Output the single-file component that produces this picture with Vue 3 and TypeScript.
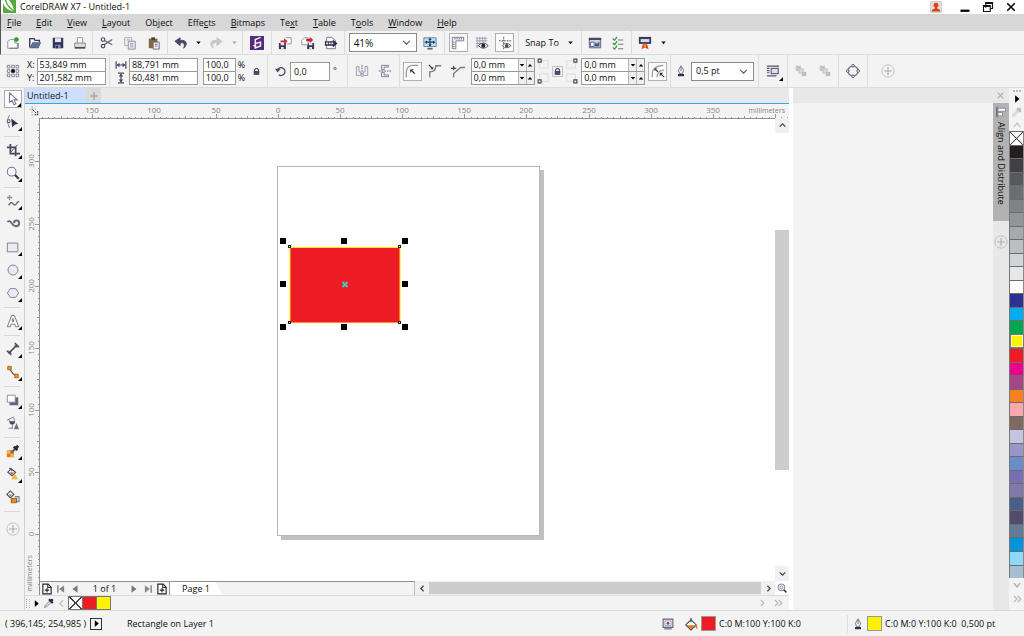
<script setup lang="ts">
import { ref } from 'vue'

const P = '#4a4763'

const icons: Record<string, string> = {
  logo: '<rect width="16" height="16" fill="#58a83f"/><path d="M0 3Q1 11 13 14 5 9 2 0H0z" fill="#fff"/><path d="M4 0q2 8 9.500 13Q12 5 7 0z" fill="#fff"/><path d="M13 14L5 5" stroke="#58a83f"/>',
  user: '<rect x="1" y="1" width="14" height="14" fill="#e6dcda" stroke="#c9bcba"/><circle cx="8" cy="5.500" r="3.200" fill="#d8401c"/><path d="M6.500 8h3v2l4 2v2h-11v-2l4-2z" fill="#d8401c"/>',
  min: '<path d="M2 13h12" stroke="#000" stroke-width="3"/>',
  restore: '<path d="M5 9V2h9v8h-3M2 6h9v8H2z" fill="none" stroke="#111" stroke-width="1.500"/><path d="M5 3h9M2 7h9" stroke="#111" stroke-width="2"/>',
  close: '<path d="M3 3l10 10M13 3L3 13" stroke="#000" stroke-width="2"/>',
  newdoc: '<path d="M2 6l3-2h5v4h3v6H2z" fill="#fafafa" stroke="#8c8ca0"/><path d="M4 14h10V8" fill="none" stroke="#6d6b80"/><circle cx="12" cy="4" r="2.600" fill="#25a32a"/>',
  open: '<path d="M2 13V3h5l1 2h5v2" fill="none" stroke="#3b3960" stroke-width="1.600"/><path d="M2 14l3-7h10l-3 7z" fill="#4d6080"/><path d="M5.500 8h8.500l-2 5H3.500z" fill="#5b7596"/>',
  save: '<path d="M2 2h12v12H2z" fill="#34325a"/><path d="M4.500 2.500h7v4.500h-7z" fill="#e7e9f2"/><path d="M5 10h6v4H5z" fill="#8a90ad"/><path d="M6 11h2v3H6z" fill="#24224a"/>',
  print: '<path d="M5 8V2h6v6" fill="#fff" stroke="#85859a"/><path d="M2 8h12v5H2z" fill="#e6e7da" stroke="#77778a"/><path d="M2 13.500h12" stroke="#4c4a62" stroke-width="2"/><path d="M4 10h8" stroke="#d8cf6e"/>',
  cut: '<path d="M3 4l11 6M3 11l11-7" stroke="#666478" stroke-width="1.400"/><circle cx="3.500" cy="4" r="2" fill="#f3f3f3" stroke="#4a4763" stroke-width="1.300"/><circle cx="3.500" cy="11.500" r="2" fill="#f3f3f3" stroke="#4a4763" stroke-width="1.300"/>',
  copy: '<path d="M2 2h8v9H2z" fill="#f3f6f3" stroke="#99a9a4"/><path d="M6 6h8v9H6z" fill="#eee" stroke="#85859a"/><path d="M8 8.500h4M8 10.500h4M8 12.500h4M4 4.500h4" stroke="#8e9fae"/>',
  paste: '<path d="M2 3h10v11H2z" fill="#806a3c"/><path d="M5 1.500h4v3H5z" fill="#474340"/><path d="M7 7h7v8H7z" fill="#f1f1f5" stroke="#66647c"/><path d="M9 9.500h3M9 11.500h3" stroke="#66647c"/>',
  undo: `<path d="M7 2L1 6l6 5V8c4-1 6 1 4 6 5-4 4-10-4-9z" fill="${P}" stroke="${P}"/>`,
  redo: '<path d="M9 2l6 4-6 5V8C5 7 3 9 5 14 0 10 1 4 9 5z" fill="#c7c7c9" stroke="#c7c7c9"/>',
  caret: '<path d="M4 6h8l-4 5z" fill="#111"/>',
  caretgrey: '<path d="M4 6h8l-4 5z" fill="#aaa"/>',
  sconnect: '<rect width="16" height="16" fill="#562a7d"/><path d="M12 1.500L6 4v4.500l6-1.500v4.500L5 14" fill="none" stroke="#f5eefa" stroke-width="1.700"/><path d="M3 11l4-2.500v5z" fill="#f5eefa"/>',
  imp: '<path d="M1 8h8v7H1z" fill="#39375e"/><path d="M3 8h4v2.500H3zM3.500 12.500h3V15h-3z" fill="#e6e8f0"/><path d="M9 2h6v7h-5" fill="#fff" stroke="#84849a"/><path d="M3 5h4V2.500L11 6 7 9V7H3z" fill="#c1272d"/>',
  exp: '<path d="M7 8h8v7H7z" fill="#39375e"/><path d="M9 8h4v2.500H9zM9.500 12.500h3V15h-3z" fill="#e6e8f0"/><path d="M1 5l3-3h4v8H1z" fill="#fff" stroke="#84849a"/><path d="M6 3h4V1l4 3.500L10 8V6H6z" fill="#c1272d"/>',
  pdf: '<path d="M3 1.500h6l4 3.500v9.500H3z" fill="#fff" stroke="#6f6d84"/><path d="M1 6h9V4l5.500 4.500L10 13v-2H1z" fill="#2f2d49"/><path d="M2.500 8.500h9" stroke="#fff" stroke-width="2" stroke-dasharray="2 1"/>',
  full: '<path d="M1 2h14v10H1z" fill="#bfe2ef" stroke="#5d7d96"/><path d="M5 14.500h6" stroke="#667" stroke-width="2"/><path d="M8 3v8M3 7h10" stroke="#24345c" stroke-width="1.300"/><path d="M8 2l2 2.500H6zM8 12l2-2.500H6zM2 7l2.500-2v4zM14 7l-2.500-2v4z" fill="#24345c"/>',
  rulers: '<path d="M1.500 1.500h13v4h-9v9h-4z" fill="#eceef6" stroke="#74738c"/><path d="M4.500 2v2M7 2v2M9.500 2v2M12 2v2M2 7h2M2 9.500h2M2 12h2" stroke="#74738c"/>',
  grid: '<path d="M1 2.500h13M1 5.500h13M1 8.500h6M1 11.500h4M2.500 1v13M5.500 1v11M8.500 1v6M11.500 1v6" stroke="#9a99b4"/><path d="M4 11q5.500-6 11 0-5.500 6-11 0z" fill="#fff" stroke="#333"/><circle cx="9.500" cy="11" r="2.300" fill="#222"/>',
  guides: '<path d="M6.500 1v14M1 5.500h14" stroke="#444" stroke-dasharray="2 1"/><path d="M5 11q5-5 10 0-5 5-10 0z" fill="#fff" stroke="#555"/><circle cx="10" cy="11" r="2" fill="#444"/>',
  options: '<path d="M1.500 2.500h13v11h-13z" fill="#cdd5e6" stroke="#54526e"/><path d="M1 3.500h14" stroke="#3f3d58" stroke-width="2"/><path d="M3 7h4v5H3z" fill="#fff" stroke="#44587e"/><path d="M8 12V7l2 2 3-3v6z" fill="#44587e"/>',
  checks: '<path d="M2 3l2 2 3-4M2 8l2 2 3-4M2 13l2 2 3-4" fill="none" stroke="#3f9a3f" stroke-width="1.500"/><path d="M8 4.500h6M8 9.500h6M8 14.500h6" stroke="#77768d" stroke-width="1.200"/>',
  launch: '<path d="M1 1h14v8H1z" fill="#3a3853"/><path d="M3 3.500h10V7H3z" fill="#d4dbe8"/><path d="M5.500 9.500h5L12 15l-4-2-4 2z" fill="#e2401e"/><path d="M7 10h2v3H7z" fill="#f8a11c"/>',
  origin: '<g fill="#fff" stroke="#77768d"><path d="M1.500 1.500h3v3h-3zM6.500 1.500h3v3h-3zM11.500 1.500h3v3h-3zM1.500 6.500h3v3h-3zM11.500 6.500h3v3h-3zM1.500 11.500h3v3h-3zM6.500 11.500h3v3h-3zM11.500 11.500h3v3h-3z"/></g><path d="M6 6h4v4H6z" fill="#000"/>',
  wdim: `<path d="M1.500 3v10M14.500 3v10M3 8h10" stroke="${P}" stroke-width="1.600"/><path d="M2 8l4-3v6zM14 8l-4-3v6z" fill="${P}"/>`,
  hdim: `<path d="M4 1.500h8M4 14.500h8M8 3v10" stroke="${P}" stroke-width="1.600"/><path d="M8 2L5 6h6zM8 14l-3-4h6z" fill="${P}"/>`,
  lock: `<path d="M4.500 8V5q3.500-5 7 0v3" fill="none" stroke="${P}" stroke-width="2"/><path d="M3 7h10v7H3z" fill="${P}"/>`,
  rotate: `<path d="M4 5.500a5.200 5.200 0 1 1 1 7.500" fill="none" stroke="${P}" stroke-width="1.800"/><path d="M0 5h7.500L3.500 10z" fill="${P}"/>`,
  mirrorh: '<path d="M1.500 3v10h5V9h-2V3zM14.500 3v10h-5V9h2V3z" fill="#eef" stroke="#9695a8"/><path d="M8 1v14" stroke="#555" stroke-dasharray="2 1"/>',
  mirrorv: '<path d="M4 1.500h8v2H7v3H4zM4 14.500h8v-2H7v-3H4z" fill="#eef" stroke="#77768d"/><path d="M1 8h14" stroke="#555" stroke-dasharray="2 1"/>',
  round: '<path d="M1.500 15V9Q2 2 9 1.500h6" fill="none" stroke="#9a99a8" stroke-width="1.500"/><path d="M11 11L8 8" stroke="#333" stroke-width="1.500"/><path d="M6 6h4l-4 4z" fill="#333"/>',
  scallop: '<path d="M2 15V9q7 0 7-7h6" fill="none" stroke="#77768d" stroke-width="1.500"/><path d="M1 1l4 4" stroke="#333" stroke-width="1.500"/><path d="M6 6H3l3-3z" fill="#333"/>',
  chamfer: '<path d="M3 15v-4l8-7h5" fill="none" stroke="#77768d" stroke-width="1.500"/><path d="M0 5h6M3 2v5" stroke="#444" stroke-width="1.300"/>',
  cornertl: '<path d="M5 3.500h10v10M3.500 5v8.500H15" fill="none" stroke="#d3d3d3"/><path d="M1.500 1.500h4v4h-4z" fill="#fff" stroke="#444" stroke-width="1.500"/>',
  cornerbl: '<path d="M5 12.500h10v-10M3.500 11V2.500H15" fill="none" stroke="#d3d3d3"/><path d="M1.500 10.500h4v4h-4z" fill="#fff" stroke="#444" stroke-width="1.500"/>',
  cornertr: '<path d="M11 3.500H1v10M12.500 5v8.500H1" fill="none" stroke="#d3d3d3"/><path d="M10.500 1.500h4v4h-4z" fill="#fff" stroke="#444" stroke-width="1.500"/>',
  cornerbr: '<path d="M11 12.500H1v-10M12.500 11V2.500H1" fill="none" stroke="#d3d3d3"/><path d="M10.500 10.500h4v4h-4z" fill="#fff" stroke="#444" stroke-width="1.500"/>',
  relative: '<path d="M1.500 15V11Q2 2 14 1.500M7 15q0-8 8-8" fill="none" stroke="#9a99a8" stroke-width="1.400"/><path d="M4 5h3L4 8zM10 10h4l-4 4z" fill="#333"/><path d="M5 6l3 3M11 11l4 4" stroke="#333" stroke-width="1.300"/>',
  pen: '<path d="M8 1l3.500 6-1.500 4.500H6L4.500 7z" fill="#eceef2" stroke="#5d5b72"/><path d="M8 2v6" stroke="#5d5b72"/><path d="M4 13.500h8" stroke="#33314c" stroke-width="3"/>',
  wrap: '<path d="M1 2.500h14M1 5h3M1 7.500h3M1 10h3M1 13.500h11" stroke="#55536b" stroke-width="1.300"/><path d="M6 5h8v6H6z" fill="#dfe2ec" stroke="#67657e" stroke-width="1.400"/>',
  order: '<path d="M1 1h7v7H1z" fill="#c6c6c6"/><path d="M5 5h6v6H5z" fill="#dadada" stroke="#bbb"/><path d="M9 9h6v6H9z" fill="#c0c0c0"/>',
  curves: `<circle cx="8" cy="8" r="5.800" fill="none" stroke="#77768d" stroke-width="1.600"/><g fill="#fff" stroke="${P}"><circle cx="8" cy="2" r="1.500"/><circle cx="8" cy="14" r="1.500"/><circle cx="2" cy="8" r="1.500"/><circle cx="14" cy="8" r="1.500"/></g>`,
  plus: '<circle cx="8" cy="8" r="7" fill="none" stroke="#b9b9b9"/><path d="M8 3.500v9M3.500 8h9" stroke="#adadad" stroke-width="1.300"/>',
  pick: '<path d="M4 1v11l3-2.500 2 5 2.300-1-2-4.500H13z" fill="#fff" stroke="#77768d" stroke-width="1.200"/>',
  shape: `<path d="M4 0Q0 6 4 15" fill="none" stroke="#77768d"/><path d="M1.500 5.500h3v3h-3z" fill="#fff" stroke="${P}"/><path d="M6 4l8 6-4 1-3 3z" fill="#34324c"/>`,
  crop: `<path d="M5 1v11h11M1 5h10v10" fill="none" stroke="${P}" stroke-width="2"/><path d="M13 2L5 11" stroke="${P}"/>`,
  zoom: '<path d="M9.500 9.500l5 5" stroke="#33314c" stroke-width="2.400"/><circle cx="6.500" cy="6.500" r="5" fill="#f4f5fb" stroke="#77768d" stroke-width="1.200"/>',
  freehand: '<path d="M4 1v6M1 4h6" stroke="#8f8ea2" stroke-width="1.500"/><path d="M3 13q3-5 5-2t4 0 3-2" fill="none" stroke="#66647c" stroke-width="1.600"/>',
  artistic: '<path d="M1.500 5.500q3-2 4.500 1t5 4q4 0 4-3.500t-3.500-3-1.500 3" fill="none" stroke="#66647c" stroke-width="2.200"/>',
  rect: '<path d="M1.500 3.500h12v10h-12z" fill="#eaebf5" stroke="#77768d"/>',
  ellipse: '<circle cx="8" cy="8" r="5.700" fill="#eaebf5" stroke="#77768d"/>',
  polygon: '<path d="M5 3h6l3.500 5-3.500 5H5L1.500 8z" fill="#eaebf5" stroke="#77768d"/>',
  text: '<path d="M1.500 14.500L6.500 1.500h3l5 13h-3.500l-1-3h-4l-1 3zM7 8.500h2L8 5z" fill="#fff" stroke="#66647c"/>',
  dimension: `<path d="M4 12L12 4" stroke="${P}" stroke-width="2"/><path d="M1 10l5 5M10 1l5 5" stroke="${P}" stroke-width="1.500"/><path d="M3 13V9l4 4zM13 3v4L9 3z" fill="${P}"/>`,
  connector: `<path d="M4 4l4 6 4 2" fill="none" stroke="${P}" stroke-width="1.300"/><path d="M2 1.500h4v4H2zM10 10.500h4v4h-4z" fill="#f39222" stroke="#b35c12"/>`,
  shadow: '<path d="M4 5h10v9H4z" fill="#66647c"/><path d="M1.500 2.500h9v8h-9z" fill="#fff" stroke="#85849a"/>',
  transparency: `<path d="M1 5l8-4M3.500 4l1.500 5q3 2 5-1L9 2M7.500 9.500L7 14M3 14h5" fill="none" stroke="#77768d"/><path d="M4 6h6L9 9H5z" fill="${P}"/><path d="M12 8l3 7H9z" fill="#66758f"/>`,
  eyedrop: '<path d="M1 7h8v8H1z" fill="#e2791c"/><path d="M1 7h4v4H1zM5 11h4v4H5z" fill="#f6b04e"/><path d="M6 10l5-5" stroke="#66647c" stroke-width="2.500"/><path d="M9 3l4 4M11 5l3-3" stroke="#28263f" stroke-width="3.200"/>',
  ifill: `<path d="M2 6l4-4 5 4-4 4z" fill="#eef" stroke="${P}" stroke-width="1.200"/><path d="M4 6h5l-2 3z" fill="#cf7a22"/><path d="M4 1l3 3" stroke="${P}" stroke-width="1.500"/><path d="M10 8l4 6H6z" fill="#f4b83c"/>`,
  sfill: `<path d="M1 5l4-4 4 4-4 4z" fill="#eef" stroke="${P}" stroke-width="1.200"/><path d="M3 5h4L5 8z" fill="#cf7a22"/><path d="M10 7.500h5v6h-3" fill="#c9d4e6" stroke="#5a6a8a"/><path d="M6 9.500h6v5H6z" fill="#f08c2e" stroke="#925015"/>`,
  corner: '<path d="M5 1v14M1 5h12" stroke="#555" stroke-dasharray="2 2"/><path d="M6 6l5 5M14 8v6H9" fill="none" stroke="#222" stroke-width="1.600" stroke-dasharray="3 1"/>',
  addpage: '<path d="M2.500 1.500h7l4 4v9h-11z" fill="#fff" stroke="#222" stroke-width="1.500"/><path d="M9 1.500V6h4.500M8 6.500v6M5 9.500h6" fill="none" stroke="#222" stroke-width="1.400"/>',
  first: '<path d="M3 2v12" stroke="#777" stroke-width="2"/><path d="M13 2v12L5 8z" fill="#888"/>',
  prev: '<path d="M12 2v12L4 8z" fill="#777"/>',
  next: '<path d="M4 2v12l8-6z" fill="#777"/>',
  last: '<path d="M13 2v12" stroke="#777" stroke-width="2"/><path d="M3 2v12l8-6z" fill="#888"/>',
  play: '<path d="M5 2v12l7-6z" fill="#000"/>',
  dropper: '<path d="M2 14l1-3 6-6 2 2-6 6z" fill="#d8dbe4" stroke="#77768d"/><path d="M8 3l5 5M10.500 5.500L13 3" stroke="#28263f" stroke-width="3"/>',
  droppergrey: '<path d="M2 14l1-3 6-6 2 2-6 6z" fill="#ddd" stroke="#ccc"/><path d="M8 3l5 5M10.500 5.500L13 3" stroke="#bdbdbd" stroke-width="3"/>',
  up: '<path d="M3 10l5-5 5 5" fill="none" stroke="#444" stroke-width="2.200"/>',
  down: '<path d="M3 6l5 5 5-5" fill="none" stroke="#444" stroke-width="2.200"/>',
  left: '<path d="M10 3L5 8l5 5" fill="none" stroke="#444" stroke-width="2.200"/>',
  right: '<path d="M6 3l5 5-5 5" fill="none" stroke="#444" stroke-width="2.200"/>',
  upg: '<path d="M3 11l5-6 5 6" fill="none" stroke="#c4c4c4" stroke-width="2.200"/>',
  downg: '<path d="M3 5l5 6 5-6" fill="none" stroke="#aaa" stroke-width="2.200"/>',
  leftg: '<path d="M11 2L5 8l6 6" fill="none" stroke="#bdbdbd" stroke-width="2.200"/>',
  rightg: '<path d="M6 3l5 5-5 5" fill="none" stroke="#bbb" stroke-width="2.200"/>',
  moreg: '<path d="M3 3l5 5-5 5M9 3l5 5-5 5" fill="none" stroke="#b4b4b4" stroke-width="1.800"/>',
  chev: '<path d="M2 5l6 6 6-6" fill="none" stroke="#555" stroke-width="1.800"/>',
  closeg: '<path d="M3 3l10 10M13 3L3 13" stroke="#a8a8a8" stroke-width="1.800"/>',
  plusg: '<path d="M8 2v12M2 8h12" stroke="#a8a8a8" stroke-width="2.400"/>',
  align: '<path d="M2.500 1v14" stroke="#55536b" stroke-width="1.500"/><path d="M4 3h10v4H4zM4 9h6v4H4z" fill="#fff" stroke="#77768d"/>',
  zoomnav: '<path d="M10 10l5 5" stroke="#33314c" stroke-width="2.400"/><circle cx="7" cy="7" r="5.500" fill="#f4f5fb" stroke="#66647c" stroke-width="1.300"/><circle cx="7" cy="7" r="2.300" fill="none" stroke="#66647c"/>',
  proof: '<path d="M1.500 1.500h13v11h-13z" fill="#dfe2ec" stroke="#66647c" stroke-width="1.500"/><path d="M4 4h8v6H4z" fill="#fff" stroke="#8b93b8"/><circle cx="8" cy="7" r="2" fill="#a33c50"/><path d="M3 14.500h10" stroke="#66647c" stroke-width="1.500"/>',
  bucket: '<path d="M2 9l6-6 6 6-6 6z" fill="#fff" stroke="#44425c" stroke-width="1.200"/><path d="M3 9.500h10L8 14z" fill="#d9781c"/><path d="M8 1v5" stroke="#44425c" stroke-width="1.200"/><path d="M13 8q3 2 2 6-2-1-2-6z" fill="#d9781c"/>',
}

const menus: [string, string, string][] = [
  ['', 'F', 'ile'], ['', 'E', 'dit'], ['', 'V', 'iew'], ['', 'L', 'ayout'], ['Ob', 'j', 'ect'],
  ['Effe', 'c', 'ts'], ['', 'B', 'itmaps'], ['Te', 'x', 't'], ['', 'T', 'able'], ['T', 'o', 'ols'],
  ['', 'W', 'indow'], ['', 'H', 'elp'],
]

const tools: { name: string; label: string; flyout?: boolean; sep?: boolean; active?: boolean }[] = [
  { name: 'pick', label: 'Pick', flyout: true, active: true },
  { name: 'shape', label: 'Shape', flyout: true, sep: true },
  { name: 'crop', label: 'Crop', flyout: true },
  { name: 'zoom', label: 'Zoom', flyout: true, sep: true },
  { name: 'freehand', label: 'Freehand', flyout: true },
  { name: 'artistic', label: 'Artistic media' },
  { name: 'rect', label: 'Rectangle', flyout: true },
  { name: 'ellipse', label: 'Ellipse', flyout: true },
  { name: 'polygon', label: 'Polygon', flyout: true, sep: true },
  { name: 'text', label: 'Text', flyout: true, sep: true },
  { name: 'dimension', label: 'Dimension', flyout: true },
  { name: 'connector', label: 'Connector', flyout: true, sep: true },
  { name: 'shadow', label: 'Drop shadow', flyout: true },
  { name: 'transparency', label: 'Transparency', sep: true },
  { name: 'eyedrop', label: 'Color eyedropper', flyout: true },
  { name: 'ifill', label: 'Interactive fill', flyout: true },
  { name: 'sfill', label: 'Smart fill', sep: true },
]

const palette = [
  '#231f20', '#414042', '#58595b', '#6d6e71', '#808285', '#939598', '#a7a9ac', '#bcbec0', '#d1d3d4',
  '#e6e7e8', '#ffffff', '#2e3192', '#00aeef', '#00a651', '#fff200', '#ed1c24', '#ec008c', '#a54686',
  '#f58220', '#f9a8ac', '#7f6a62', '#c7c4e2', '#9b94cb', '#6a8cc8', '#7a6fb5', '#8179a8', '#465f8c',
  '#524b6b', '#647b96', '#0095da', '#8ed8f8', '#a3bfd0',
]

const stepPx = 6.21
const hOrigin = 253
const vOrigin = 416

interface Tick { pos: number; len: number; label: string }

function makeTicks(origin: number, from: number, to: number, dir: number): Tick[] {
  const out: Tick[] = []
  for (let i = from; i <= to; i++) {
    const major = i % 10 === 0
    out.push({
      pos: Math.round(origin + dir * i * stepPx),
      len: major ? 4 : i % 5 === 0 ? 2 : 1,
      label: major ? String(Math.abs(i * 5)) : '',
    })
  }
  return out
}
const hTicks = makeTicks(hOrigin, -38, 82, 1)
const vTicks = makeTicks(vOrigin, -8, 66, -1)

const handles = [[3, 3], [64, 3], [125, 3], [3, 46], [125, 46], [3, 89], [64, 89], [125, 89]]
const nodes = [[10, 9], [120, 9], [10, 85], [120, 85]]

const posX = ref('53,849 mm')
const posY = ref('201,582 mm')
const sizeW = ref('88,791 mm')
const sizeH = ref('60,481 mm')
const scaleX = ref('100,0')
const scaleY = ref('100,0')
const angle = ref('0,0')
const radii = ref([['0,0 mm', '0,0 mm'], ['0,0 mm', '0,0 mm']])
</script>

<template>
  <div class="app">
    <header class="titlebar">
      <svg class="logo" viewBox="0 0 16 16" v-html="icons.logo" />
      <span class="title">CorelDRAW X7 - Untitled-1</span>
      <button class="win user" aria-label="Account"><svg class="i12" viewBox="0 0 16 16" v-html="icons.user" /></button>
      <button class="win" aria-label="Minimize"><svg class="i12" viewBox="0 0 16 16" v-html="icons.min" /></button>
      <button class="win" aria-label="Restore"><svg class="i12" viewBox="0 0 16 16" v-html="icons.restore" /></button>
      <button class="win" aria-label="Close"><svg class="i12" viewBox="0 0 16 16" v-html="icons.close" /></button>
    </header>

    <nav class="menubar">
      <button v-for="m in menus" :key="m.join('')">{{ m[0] }}<u>{{ m[1] }}</u>{{ m[2] }}</button>
    </nav>

    <div class="toolbar standard">
      <div class="group">
        <button v-for="n in ['newdoc', 'open', 'save', 'print']" :key="n" class="tb" :aria-label="n"><svg class="i14" viewBox="0 0 16 16" v-html="icons[n]" /></button>
      </div>
      <div class="group">
        <button v-for="n in ['cut', 'copy', 'paste']" :key="n" class="tb" :aria-label="n"><svg class="i14" viewBox="0 0 16 16" v-html="icons[n]" /></button>
      </div>
      <div class="group">
        <button class="tb" aria-label="Undo"><svg class="i14" viewBox="0 0 16 16" v-html="icons.undo" /></button>
        <button class="tb slim" aria-label="Undo list"><svg class="i8" viewBox="0 0 16 16" v-html="icons.caret" /></button>
        <button class="tb" aria-label="Redo"><svg class="i14" viewBox="0 0 16 16" v-html="icons.redo" /></button>
        <button class="tb slim" aria-label="Redo list"><svg class="i8" viewBox="0 0 16 16" v-html="icons.caretgrey" /></button>
      </div>
      <div class="group">
        <button class="tb" aria-label="Search content"><svg class="i14" viewBox="0 0 16 16" v-html="icons.sconnect" /></button>
      </div>
      <div class="group">
        <button v-for="n in ['imp', 'exp', 'pdf']" :key="n" class="tb" :aria-label="n"><svg class="i14" viewBox="0 0 16 16" v-html="icons[n]" /></button>
      </div>
      <div class="group">
        <span class="combo zoomlevel">
          <select aria-label="Zoom level"><option>41%</option><option>100%</option></select>
          <svg class="i8" viewBox="0 0 16 16" v-html="icons.chev" />
        </span>
        <button class="tb" aria-label="Full-screen preview"><svg class="i14" viewBox="0 0 16 16" v-html="icons.full" /></button>
      </div>
      <div class="group">
        <button class="tb boxed" aria-label="Show rulers"><svg class="i14" viewBox="0 0 16 16" v-html="icons.rulers" /></button>
        <button class="tb" aria-label="Show grid"><svg class="i14" viewBox="0 0 16 16" v-html="icons.grid" /></button>
        <button class="tb boxed" aria-label="Show guidelines"><svg class="i14" viewBox="0 0 16 16" v-html="icons.guides" /></button>
      </div>
      <div class="group">
        <button class="snap">Snap To<svg class="i8" viewBox="0 0 16 16" v-html="icons.caret" /></button>
      </div>
      <div class="group">
        <button v-for="n in ['options', 'checks']" :key="n" class="tb" :aria-label="n"><svg class="i14" viewBox="0 0 16 16" v-html="icons[n]" /></button>
      </div>
      <div class="group">
        <button class="tb" aria-label="Application launcher"><svg class="i14" viewBox="0 0 16 16" v-html="icons.launch" /></button>
        <button class="tb slim" aria-label="Launcher list"><svg class="i8" viewBox="0 0 16 16" v-html="icons.caret" /></button>
      </div>
    </div>

    <div class="toolbar property">
      <div class="group">
        <button class="tb" aria-label="Object origin"><svg class="i14" viewBox="0 0 16 16" v-html="icons.origin" /></button>
        <div class="pair">
          <label for="px">X:</label><input id="px" v-model="posX" class="wide" />
          <label for="py">Y:</label><input id="py" v-model="posY" class="wide" />
        </div>
      </div>
      <div class="group">
        <div class="pair">
          <label for="sw" aria-label="Width"><svg class="i12" viewBox="0 0 16 16" v-html="icons.wdim" /></label><input id="sw" v-model="sizeW" class="wide" />
          <label for="sh" aria-label="Height"><svg class="i12" viewBox="0 0 16 16" v-html="icons.hdim" /></label><input id="sh" v-model="sizeH" class="wide" />
        </div>
        <div class="pair">
          <input id="kx" v-model="scaleX" class="small" /><label for="kx">%</label>
          <input id="ky" v-model="scaleY" class="small" /><label for="ky">%</label>
        </div>
        <button class="tb lockbtn" aria-label="Lock ratio"><svg class="i8" viewBox="0 0 16 16" v-html="icons.lock" /></button>
      </div>
      <div class="group rotation">
        <label for="rot" aria-label="Angle of rotation"><svg class="i12" viewBox="0 0 16 16" v-html="icons.rotate" /></label>
        <input id="rot" v-model="angle" class="angle" /><span class="deg">°</span>
      </div>
      <div class="group">
        <button v-for="n in ['mirrorh', 'mirrorv']" :key="n" class="tb" :aria-label="n"><svg class="i14" viewBox="0 0 16 16" v-html="icons[n]" /></button>
      </div>
      <div class="group">
        <button class="tb boxed" aria-label="Round corner"><svg class="i14" viewBox="0 0 16 16" v-html="icons.round" /></button>
        <button class="tb" aria-label="Scalloped corner"><svg class="i14" viewBox="0 0 16 16" v-html="icons.scallop" /></button>
        <button class="tb" aria-label="Chamfered corner"><svg class="i14" viewBox="0 0 16 16" v-html="icons.chamfer" /></button>
        <div class="spins">
          <div v-for="(_, r) in radii[0]" :key="r" class="spin">
            <input v-model="radii[0][r]" aria-label="Corner radius" />
            <button aria-label="Decrease"><svg class="i6" viewBox="0 0 16 16"><path d="M2 5h12l-6 7z" /></svg></button>
            <button aria-label="Increase"><svg class="i6" viewBox="0 0 16 16"><path d="M2 12h12L8 5z" /></svg></button>
          </div>
        </div>
        <div class="corners">
          <svg class="i12" viewBox="0 0 16 16" v-html="icons.cornertl" />
          <svg class="i12" viewBox="0 0 16 16" v-html="icons.cornerbl" />
        </div>
        <button class="editlock" aria-label="Edit corners together"><svg class="i8" viewBox="0 0 16 16" v-html="icons.lock" /></button>
        <div class="corners">
          <svg class="i12" viewBox="0 0 16 16" v-html="icons.cornertr" />
          <svg class="i12" viewBox="0 0 16 16" v-html="icons.cornerbr" />
        </div>
        <div class="spins">
          <div v-for="(_, r) in radii[1]" :key="r" class="spin">
            <input v-model="radii[1][r]" aria-label="Corner radius" />
            <button aria-label="Decrease"><svg class="i6" viewBox="0 0 16 16"><path d="M2 5h12l-6 7z" /></svg></button>
            <button aria-label="Increase"><svg class="i6" viewBox="0 0 16 16"><path d="M2 12h12L8 5z" /></svg></button>
          </div>
        </div>
        <button class="tb boxed" aria-label="Relative corner scaling"><svg class="i14" viewBox="0 0 16 16" v-html="icons.relative" /></button>
      </div>
      <div class="group">
        <label for="ow" aria-label="Outline width"><svg class="i12" viewBox="0 0 16 16" v-html="icons.pen" /></label>
        <span class="combo outline">
          <select id="ow"><option>0,5 pt</option><option>1,0 pt</option></select>
          <svg class="i8" viewBox="0 0 16 16" v-html="icons.chev" />
        </span>
      </div>
      <div class="group">
        <button class="tb fly" aria-label="Wrap text"><svg class="i14" viewBox="0 0 16 16" v-html="icons.wrap" /></button>
      </div>
      <div class="group">
        <button class="tb" aria-label="To front"><svg class="i12" viewBox="0 0 16 16" v-html="icons.order" /></button>
        <button class="tb" aria-label="To back"><svg class="i12" viewBox="0 0 16 16" v-html="icons.order" /></button>
      </div>
      <div class="group">
        <button class="tb" aria-label="Convert to curves"><svg class="i14" viewBox="0 0 16 16" v-html="icons.curves" /></button>
      </div>
      <div class="group">
        <button class="tb" aria-label="Customize"><svg class="i14" viewBox="0 0 16 16" v-html="icons.plus" /></button>
      </div>
    </div>

    <main class="workspace">
      <aside class="toolbox">
        <template v-for="t in tools" :key="t.name">
          <button class="tool" :class="{ active: t.active, fly: t.flyout }" :aria-label="t.label">
            <svg class="i14" viewBox="0 0 16 16" v-html="icons[t.name]" />
          </button>
          <hr v-if="t.sep" />
        </template>
        <button class="tool addtool" aria-label="Customize toolbox"><svg class="i14" viewBox="0 0 16 16" v-html="icons.plus" /></button>
      </aside>

      <section class="document">
        <div class="tabs">
          <button class="tab">Untitled-1</button>
          <button class="newtab" aria-label="New document"><svg class="i10" viewBox="0 0 16 16" v-html="icons.plusg" /></button>
        </div>
        <div class="hruler">
          <svg class="hscale">
            <g v-for="t in hTicks" :key="t.pos">
              <line :x1="t.pos" :x2="t.pos" y1="14" :y2="14 - t.len" />
              <text v-if="t.label && t.pos > 30 && t.pos < 710" :x="t.pos" y="9" text-anchor="middle">{{ t.label }}</text>
            </g>
          </svg>
          <svg class="origin i10" viewBox="0 0 16 16" v-html="icons.corner" />
          <span class="unit">millimeters</span>
        </div>
        <div class="stage">
          <div class="vruler">
            <svg class="vscale">
              <g v-for="t in vTicks" :key="t.pos">
                <line :y1="t.pos" :y2="t.pos" x1="14" :x2="14 - t.len" />
                <text v-if="t.label" :transform="`translate(9 ${t.pos}) rotate(-90)`" text-anchor="middle">{{ t.label }}</text>
              </g>
            </svg>
            <span class="unit vertical">millimeters</span>
          </div>
          <div class="sheet">
            <div class="view">
              <div class="canvas">
                <div class="page" />
                <svg class="selection" viewBox="0 0 130 93">
                  <rect x="10" y="9.500" width="110" height="75" fill="#ed1c24" stroke="#ffe600" />
                  <path d="M10 84.500h110" stroke="#f7941d" />
                  <rect v-for="(h, k) in handles" :key="'h' + k" :x="h[0] - 3" :y="h[1] - 3" width="6" height="6" />
                  <rect v-for="(n, k) in nodes" :key="'n' + k" :x="n[0] - 1.5" :y="n[1] - 1.5" width="2" height="2" fill="#fff" stroke="#222" />
                  <path d="M62.500 44l5 5M67.500 44l-5 5" stroke="#2fcfcf" stroke-width="1.800" />
                </svg>
              </div>
              <div class="vscroll">
                <button aria-label="Scroll up"><svg class="i8" viewBox="0 0 16 16" v-html="icons.up" /></button>
                <div class="track"><span class="before" /><span class="thumb" /><span class="after" /></div>
                <button aria-label="Scroll down"><svg class="i8" viewBox="0 0 16 16" v-html="icons.down" /></button>
              </div>
            </div>
            <div class="pagebar">
              <div class="pagenav">
                <button aria-label="Add page before"><svg class="i12" viewBox="0 0 16 16" v-html="icons.addpage" /></button>
                <button aria-label="First page"><svg class="i10" viewBox="0 0 16 16" v-html="icons.first" /></button>
                <button aria-label="Previous page"><svg class="i10" viewBox="0 0 16 16" v-html="icons.prev" /></button>
                <span class="count">1 of 1</span>
                <button aria-label="Next page"><svg class="i10" viewBox="0 0 16 16" v-html="icons.next" /></button>
                <button aria-label="Last page"><svg class="i10" viewBox="0 0 16 16" v-html="icons.last" /></button>
                <button aria-label="Add page after"><svg class="i12" viewBox="0 0 16 16" v-html="icons.addpage" /></button>
                <button class="pagetab">Page 1</button>
              </div>
              <div class="hscroll">
                <button aria-label="Scroll left"><svg class="i8" viewBox="0 0 16 16" v-html="icons.left" /></button>
                <span class="thumb" />
                <button aria-label="Scroll right"><svg class="i8" viewBox="0 0 16 16" v-html="icons.right" /></button>
              </div>
              <button class="navigator" aria-label="Navigator"><svg class="i10" viewBox="0 0 16 16" v-html="icons.zoomnav" /></button>
            </div>
          </div>
        </div>
        <div class="docpalette">
          <i class="grip" />
          <button aria-label="Palette menu"><svg class="i8" viewBox="0 0 16 16" v-html="icons.play" /></button>
          <button aria-label="Eyedropper"><svg class="i12" viewBox="0 0 16 16" v-html="icons.dropper" /></button>
          <button aria-label="Scroll palette left"><svg class="i8" viewBox="0 0 16 16" v-html="icons.leftg" /></button>
          <div class="chips">
            <button class="chip none" aria-label="No color" />
            <button class="chip red" aria-label="Red" />
            <button class="chip yellow" aria-label="Yellow" />
          </div>
          <span class="spacer" />
          <button class="scr" aria-label="Scroll palette right"><svg class="i10" viewBox="0 0 16 16" v-html="icons.rightg" /></button>
          <button class="scr" aria-label="Expand palette"><svg class="i10" viewBox="0 0 16 16" v-html="icons.moreg" /></button>
        </div>
      </section>

      <aside class="docker">
        <div class="dockhead"><button aria-label="Close docker"><svg class="i8" viewBox="0 0 16 16" v-html="icons.closeg" /></button></div>
        <div class="dockbody">
          <div class="docktabs">
            <button class="docktab"><svg class="i12" viewBox="0 0 16 16" v-html="icons.align" /><span>Align and Distribute</span></button>
            <button class="dockadd" aria-label="Add docker"><svg class="i14" viewBox="0 0 16 16" v-html="icons.plus" /></button>
          </div>
        </div>
      </aside>

      <aside class="palette">
        <div class="palhead">
          <i class="dots" />
          <button aria-label="Palette menu"><svg class="i10" viewBox="0 0 16 16" v-html="icons.play" /></button>
          <button aria-label="Eyedropper"><svg class="i12" viewBox="0 0 16 16" v-html="icons.droppergrey" /></button>
          <button aria-label="Scroll up"><svg class="i10" viewBox="0 0 16 16" v-html="icons.upg" /></button>
        </div>
        <div class="swatches">
          <button class="sw none" aria-label="No color" />
          <button v-for="c in palette" :key="c" class="sw" :class="{ picked: c === '#fff200' }" :style="{ background: c }" :aria-label="c" />
        </div>
        <div class="palfoot">
          <button aria-label="Scroll down"><svg class="i10" viewBox="0 0 16 16" v-html="icons.downg" /></button>
          <button aria-label="Expand palette"><svg class="i10" viewBox="0 0 16 16" v-html="icons.moreg" /></button>
        </div>
      </aside>
    </main>

    <footer class="status">
      <span class="coords">( 396,145; 254,985 )</span>
      <button class="more" aria-label="Status options"><svg class="i8" viewBox="0 0 16 16" v-html="icons.play" /></button>
      <span class="object">Rectangle on Layer 1</span>
      <svg class="i12 proof" viewBox="0 0 16 16" v-html="icons.proof" />
      <div class="fill">
        <svg class="i14" viewBox="0 0 16 16" v-html="icons.bucket" />
        <i class="colour red" /><span>C:0 M:100 Y:100 K:0</span>
      </div>
      <div class="stroke">
        <svg class="i12" viewBox="0 0 16 16" v-html="icons.pen" />
        <i class="colour yellow" /><span>C:0 M:0 Y:100 K:0&nbsp; 0,500 pt</span>
      </div>
    </footer>
  </div>
</template>

<style>
body { margin: 0; }
</style>

<style scoped>
.app {
  height: 100vh;
  display: flex;
  flex-direction: column;
  background: #f3f3f3;
  color: #0c0c0c;
  font: 9px/12px "Open Sans", "Noto Sans", sans-serif;
  overflow: hidden;
  white-space: nowrap;
}
.app * { box-sizing: border-box; }
button, input, select { font: inherit; color: inherit; margin: 0; padding: 0; border: 0; background: none; border-radius: 0; outline: 0; }
button { display: flex; align-items: center; justify-content: center; }
svg { display: block; flex: none; }
.i6 { width: 6px; height: 6px; }
.i8 { width: 9px; height: 9px; }
.i10 { width: 10px; height: 10px; }
.i12 { width: 12px; height: 12px; }
.i14 { width: 14px; height: 14px; }

.titlebar { height: 14px; flex: none; display: flex; align-items: center; background: #fff; padding: 0 2px; border-left: 1px solid #555; }
.logo { width: 13px; height: 13px; align-self: flex-start; }
.title { flex: 1; padding-left: 4px; }
.win { width: 23px; height: 12px; }
.win.user { margin-right: 6px; }

.menubar { height: 17px; flex: none; display: flex; gap: 15px; padding-left: 6px; background: #d7d7d7; border-left: 1px solid #555; }

.toolbar { display: flex; flex: none; border-bottom: 1px solid #dcdcdc; }
.standard { height: 24px; border-left: 1px solid #555; }
.property { height: 33px; }
.group { display: flex; align-items: center; justify-content: space-evenly; }
.group:not(:last-child) { border-right: 1px solid #dcdcdc; }
.tb { width: 20px; height: 19px; flex: none; position: relative; }
.tb.slim { width: 10px; }
.tb.boxed { border: 1px solid #b0b0b0; background: #fbfbfb; width: 19px; }
.standard .group:nth-child(1) { width: 92px; }
.standard .group:nth-child(2) { width: 75px; }
.standard .group:nth-child(3) { width: 75px; }
.standard .group:nth-child(4) { width: 29px; }
.standard .group:nth-child(5) { width: 73px; }
.standard .group:nth-child(6) { width: 100px; }
.standard .group:nth-child(7) { width: 74px; }
.standard .group:nth-child(8) { width: 63px; }
.standard .group:nth-child(9) { width: 50px; }
.standard .group:nth-child(10) { width: 40px; }
.snap { gap: 7px; }

.combo { display: grid; grid-template-columns: 1fr 14px; align-items: center; border: 1px solid #8a8a8a; background: #fff; height: 19px; }
.combo select { grid-area: 1 / 1 / 2 / 3; appearance: none; width: 100%; height: 17px; padding-left: 4px; }
.combo svg { grid-area: 1 / 2; pointer-events: none; }
.zoomlevel { width: 68px; font-size: 10px; }
.outline { width: 63px; }

.property .group:nth-child(1) { width: 110px; }
.property .group:nth-child(2) { width: 158px; }
.property .group:nth-child(3) { width: 80px; }
.property .group:nth-child(4) { width: 52px; }
.property .group:nth-child(5) { width: 271px; }
.property .group:nth-child(6) { width: 88px; }
.property .group:nth-child(7) { width: 29px; }
.property .group:nth-child(8) { width: 51px; }
.property .group:nth-child(9) { width: 29px; }
.property .group:nth-child(10) { width: 39px; }
.property .rotation { justify-content: flex-start; gap: 3px; padding-left: 7px; }
.property input { border: 1px solid #9a9a9a; background: #fff; padding-left: 2px; height: 14px; min-width: 0; }
.pair { display: grid; grid-template-columns: auto auto; align-items: center; column-gap: 2px; }
.pair input:nth-of-type(2) { margin-top: -1px; }
.wide { width: 69px; }
.small { width: 33px; }
.property .angle { width: 40px; height: 19px; padding-left: 3px; }
.lockbtn { width: 12px; }
.spins { width: 64px; }
.spin { display: flex; height: 14px; border: 1px solid #9a9a9a; background: #fff; }
.spin + .spin { margin-top: -1px; }
.property .spin input { flex: 1; border: 0; height: 12px; }
.spin button { width: 8px; background: #efefef; border-left: 1px solid #b4b4b4; }
.corners { display: flex; flex-direction: column; gap: 2px; }
.editlock { width: 11px; height: 11px; border: 1px solid #c4c4c4; }
.fly::after { content: ""; position: absolute; right: 0; bottom: 0; border: 2px solid transparent; border-right-color: #000; border-bottom-color: #000; }

.workspace { flex: 1; display: flex; min-height: 0; }
.toolbox { width: 25px; flex: none; border-right: 1px solid #d2d2d2; }
.tool { width: 18px; height: 18px; margin: 2px auto 5px 4px; position: relative; }
.tool.active { border: 1px solid #aaa; background: #fcfcfc; }
.toolbox hr { border: 0; height: 1px; background: #d8d8d8; margin: 0 4px 4px; }
.toolbox .addtool { margin-top: 8px; }

.document { flex: 1; min-width: 0; display: flex; flex-direction: column; }
.tabs { height: 16px; flex: none; display: flex; background: #e8e8e8; border-bottom: 1px solid #2fa8e6; }
.tab { width: 61px; justify-content: flex-start; padding-left: 2px; background: #cce0fd; color: #101830; }
.newtab { width: 15px; background: #dadada; }

.hruler { height: 14px; flex: none; position: relative; display: flex; align-items: center; justify-content: space-between; padding: 0 4px; }
.hscale { position: absolute; left: 0; top: 0; width: 100%; height: 14px; overflow: hidden; }
.hscale line, .vscale line { stroke: #999; shape-rendering: crispEdges; }
.hscale text, .vscale text { fill: #858585; font-size: 8px; }
.unit { position: relative; color: #858585; font-size: 7px; line-height: 10px; }
.origin { position: relative; background: #f3f3f3; }
.stage { flex: 1; display: flex; min-height: 0; }
.vruler { width: 15px; flex: none; position: relative; display: flex; align-items: flex-end; border-right: 1px solid #8f8f8f; }
.vscale { position: absolute; left: 0; top: 0; width: 14px; height: 100%; overflow: hidden; }
.vertical { writing-mode: vertical-rl; transform: rotate(180deg); padding: 3px 0; }
.sheet { flex: 1; min-width: 0; display: flex; flex-direction: column; }
.view { flex: 1; display: flex; min-height: 0; }
.canvas { flex: 1; position: relative; background: #fff; border-top: 1px solid #8f8f8f; overflow: hidden; }
.page { position: absolute; left: 237px; top: 47px; width: 263px; height: 370px; border: 1px solid #b8b8b8; background: #fff; box-shadow: 4px 4px 0 #c0c0c0; }
.selection { position: absolute; left: 240px; top: 119px; width: 130px; height: 93px; }
.vscroll { width: 14px; flex: none; display: flex; flex-direction: column; background: #f0f0f0; }
.vscroll button { height: 15px; }
.track { flex: 1; display: flex; flex-direction: column; background: #fff; }
.before { flex: 97; }
.track .thumb { flex: 240; }
.after { flex: 96; }
.thumb { background: #cdcdcd; }

.pagebar { height: 14px; flex: none; display: flex; }
.pagenav { flex: 0 0 375px; display: flex; align-items: stretch; border-top: 1px solid #8f8f8f; border-right: 1px solid #bbb; }
.pagenav button { width: 14px; }
.count { width: 45px; text-align: center; line-height: 14px; }
.pagenav .pagetab { width: 53px; background: #fff; clip-path: polygon(0 0, 88% 0, 100% 100%, 0 100%); border-left: 1px solid #999; }
.hscroll { flex: 1; display: flex; background: #f0f0f0; padding: 1px 0; }
.hscroll button { width: 14px; }
.hscroll .thumb { flex: 1; }
.navigator { width: 14px; background: #fff; }
.docpalette { height: 15px; flex: none; display: flex; align-items: center; border-top: 1px solid #dcdcdc; padding: 0 4px 0 1px; gap: 2px; }
.grip { width: 4px; height: 9px; border-left: 1px dotted #999; border-right: 1px dotted #bbb; }
.docpalette button { height: 14px; }
.chips { display: flex; }
.chip { width: 15px; border: 1px solid #777; margin-right: -1px; }
.spacer { flex: 1; }
.scr { width: 14px; }
.red { background: #ed1c24; }
.yellow { background: #fff200; }
.none { background: linear-gradient(45deg, transparent 46%, #444 47%, #444 53%, transparent 54%), linear-gradient(-45deg, transparent 46%, #444 47%, #444 53%, transparent 54%), #fff; }

.docker { width: 220px; flex: none; display: flex; flex-direction: column; border-left: 4px solid #fff; }
.dockhead { height: 15px; flex: none; background: #e8e8e8; display: flex; justify-content: flex-end; padding-right: 4px; }
.dockbody { flex: 1; display: flex; justify-content: flex-end; }
.docktabs { width: 16px; background: #e8e8e8; display: flex; flex-direction: column; }
.docktab { flex-direction: column; justify-content: flex-start; gap: 4px; height: 118px; padding-top: 3px; background: #b2b2b2; }
.docktab span { writing-mode: vertical-rl; line-height: 14px; }
.dockadd { height: 42px; }

.palette { width: 15px; flex: none; display: flex; flex-direction: column; }
.palhead { height: 43px; flex: none; display: flex; flex-direction: column; justify-content: flex-end; align-items: center; }
.palhead button { height: 13px; }
.dots { width: 8px; border-top: 2px dotted #bbb; }
.swatches { flex: 1; display: flex; flex-direction: column; border-left: 1px solid #777; }
.sw { flex: 1; border-top: 1px solid #6c6c6c; border-right: 1px solid #8a8a8a; }
.sw.picked { border: 1px solid #777; box-shadow: inset 0 0 0 1px #fffbb0; }
.palfoot { height: 32px; flex: none; display: flex; flex-direction: column; align-items: center; }
.palfoot button { height: 14px; }

.status { height: 26px; flex: none; display: flex; align-items: center; border-top: 1px solid #dadada; padding-left: 5px; }
.coords { width: 85px; }
.more { width: 12px; height: 12px; border: 1px solid #333; }
.object { flex: 1; padding-left: 25px; }
.proof { margin-right: 10px; }
.fill, .stroke { display: flex; align-items: center; gap: 3px; }
.fill { width: 164px; height: 18px; border-right: 1px solid #ddd; }
.stroke { width: 176px; padding-left: 4px; }
.colour { width: 15px; height: 15px; border: 1px solid #999; }
</style>
